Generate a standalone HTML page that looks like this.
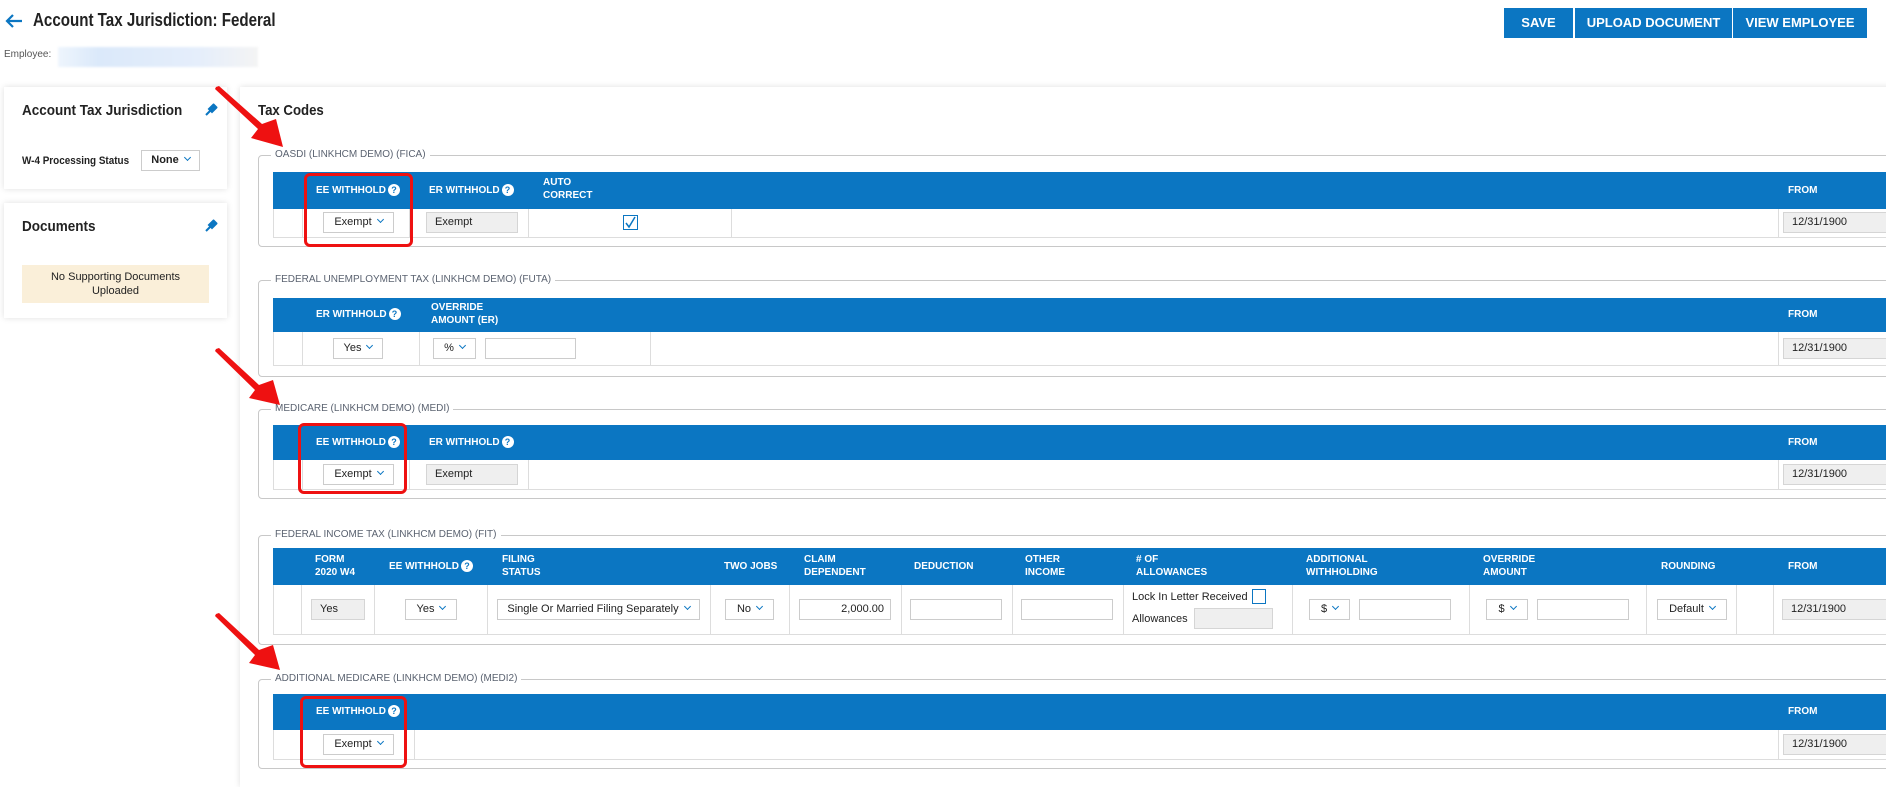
<!DOCTYPE html>
<html><head><meta charset="utf-8">
<style>
*{box-sizing:border-box;margin:0;padding:0}
body{width:1886px;height:776px;overflow:hidden;background:#fff;font-family:"Liberation Sans Narrow","Liberation Sans",sans-serif;color:#222;position:relative}
.a{position:absolute}
.card{position:absolute;background:#fff;box-shadow:0 0 6px rgba(0,0,0,.13)}
.fs{position:absolute;left:258px;right:-10px;border:1px solid #c8c8c8;border-radius:4px}
.lg{position:absolute;left:12px;top:-7px;background:#fff;padding:0 4px;font-size:10px;color:#5a6270;white-space:nowrap}
.hd{position:absolute;left:273px;right:0;background:#0b76c2}
.row{position:absolute;left:273px;right:0;border-bottom:1px solid #ddd;background:#fff}
.ht{position:absolute;color:#fff;font-size:10px;font-weight:bold;line-height:13px;white-space:nowrap}
.q{display:inline-block;width:12px;height:12px;border-radius:50%;background:#fff;color:#0b76c2;font-size:9px;text-align:center;line-height:12px;vertical-align:middle;margin-left:2px}
.sel{position:absolute;border:1px solid #ccc;background:#fff;font-size:11px;text-align:center;line-height:19px;height:21px;white-space:nowrap}
.sel i{display:inline-block;width:5px;height:5px;border-right:1px solid #0b76c2;border-bottom:1px solid #0b76c2;transform:rotate(45deg);margin-left:6px;position:relative;top:-3px}
.gb{position:absolute;border:1px solid #d5d5d5;background:#efefef;font-size:11px;line-height:19px;height:21px;padding-left:8px}
.in{position:absolute;border:1px solid #ccc;background:#fff;height:21px;font-size:11px;line-height:19px;text-align:right;padding-right:6px}
.vl{position:absolute;width:1px;background:#ddd}
.red{position:absolute;border:3px solid #ee1111;border-radius:6px}
.btn{position:absolute;top:8px;height:30px;background:#0b76c2;color:#fff;font-size:13px;font-weight:bold;text-align:center;line-height:30px}
</style></head><body>
<svg class="a" style="left:5px;top:14px" width="18" height="14"><path d="M8 1 L2 7 L8 13 M2 7 H17" stroke="#0b76c2" stroke-width="2.2" fill="none"/></svg>
<div class="a" style="left:33px;top:10px;font-size:18px;font-weight:bold;color:#222;transform:scaleX(.84);transform-origin:0 0;white-space:nowrap">Account Tax Jurisdiction: Federal</div>
<div class="a" style="left:4px;top:49px;font-size:10px;color:#555">Employee:</div>
<div class="a" style="left:58px;top:47px;width:200px;height:20px;background:linear-gradient(90deg,#eef5fd,#dbe9fa 20%,#e5eefb 70%,#f4f4f4);filter:blur(1px)"></div>
<div class="btn" style="left:1504px;width:69px">SAVE</div>
<div class="btn" style="left:1575px;width:157px">UPLOAD DOCUMENT</div>
<div class="btn" style="left:1733px;width:134px">VIEW EMPLOYEE</div>

<div class="card" style="left:4px;top:87px;width:223px;height:102px"></div>
<div class="a" style="left:22px;top:102px;font-size:15px;font-weight:bold;transform:scaleX(.9);transform-origin:0 0;white-space:nowrap">Account Tax Jurisdiction</div>
<svg class="a" style="left:204px;top:103px" width="14" height="14"><path d="M2 12 L6 8" stroke="#0b76c2" stroke-width="2"/><path d="M5 6 L9 2 L12 5 L8 9 Z M9 1 L13 5" stroke="#0b76c2" stroke-width="2" fill="#0b76c2"/></svg>
<div class="a" style="left:22px;top:155px;font-size:11px;font-weight:bold;transform:scaleX(.9);transform-origin:0 0;white-space:nowrap">W-4 Processing Status</div>
<div class="sel" style="left:141px;top:150px;width:59px;font-weight:bold">None<i></i></div>

<div class="card" style="left:4px;top:203px;width:223px;height:115px"></div>
<div class="a" style="left:22px;top:218px;font-size:15px;font-weight:bold;transform:scaleX(.9);transform-origin:0 0">Documents</div>
<svg class="a" style="left:204px;top:219px" width="14" height="14"><path d="M2 12 L6 8" stroke="#0b76c2" stroke-width="2"/><path d="M5 6 L9 2 L12 5 L8 9 Z M9 1 L13 5" stroke="#0b76c2" stroke-width="2" fill="#0b76c2"/></svg>
<div class="a" style="left:22px;top:265px;width:187px;height:38px;background:#faefd9;font-size:11px;text-align:center;line-height:14px;padding-top:5px">No Supporting Documents<br>Uploaded</div>

<div class="card" style="left:240px;top:87px;width:1660px;height:700px"></div>
<div class="a" style="left:258px;top:102px;font-size:15px;font-weight:bold;transform:scaleX(.88);transform-origin:0 0">Tax Codes</div>

<!-- OASDI -->
<div class="fs" style="top:155px;height:92px"><div class="lg">OASDI (LINKHCM DEMO) (FICA)</div></div>
<div class="hd" style="top:172px;height:37px"></div>
<div class="ht" style="left:316px;top:184px">EE WITHHOLD<span class="q">?</span></div>
<div class="ht" style="left:429px;top:184px">ER WITHHOLD<span class="q">?</span></div>
<div class="ht" style="left:543px;top:176px">AUTO<br>CORRECT</div>
<div class="ht" style="left:1788px;top:184px">FROM</div>
<div class="row" style="top:209px;height:29px;border-left:1px solid #ddd"></div>
<div class="vl" style="left:302px;top:209px;height:28px"></div><div class="vl" style="left:409px;top:209px;height:28px"></div><div class="vl" style="left:528px;top:209px;height:28px"></div><div class="vl" style="left:731px;top:209px;height:28px"></div><div class="vl" style="left:1778px;top:209px;height:28px"></div>
<div class="sel" style="left:323px;top:212px;width:71px">Exempt<i></i></div>
<div class="gb" style="left:426px;top:212px;width:92px">Exempt</div>
<div class="a" style="left:623px;top:215px;width:15px;height:15px;border:1px solid #0b76c2"><svg width="13" height="13" style="position:absolute;left:0;top:0"><path d="M2 7 L5 11 L11 1" stroke="#0b76c2" stroke-width="1.5" fill="none"/></svg></div>
<div class="gb" style="left:1783px;top:212px;width:110px">12/31/1900</div>

<!-- FUTA -->
<div class="fs" style="top:280px;height:97px"><div class="lg">FEDERAL UNEMPLOYMENT TAX (LINKHCM DEMO) (FUTA)</div></div>
<div class="hd" style="top:298px;height:34px"></div>
<div class="ht" style="left:316px;top:308px">ER WITHHOLD<span class="q">?</span></div>
<div class="ht" style="left:431px;top:301px">OVERRIDE<br>AMOUNT (ER)</div>
<div class="ht" style="left:1788px;top:308px">FROM</div>
<div class="row" style="top:332px;height:34px;border-left:1px solid #ddd"></div>
<div class="vl" style="left:302px;top:332px;height:33px"></div><div class="vl" style="left:419px;top:332px;height:33px"></div><div class="vl" style="left:650px;top:332px;height:33px"></div><div class="vl" style="left:1778px;top:332px;height:33px"></div>
<div class="sel" style="left:333px;top:338px;width:50px">Yes<i></i></div>
<div class="sel" style="left:433px;top:338px;width:43px">%<i></i></div>
<div class="in" style="left:485px;top:338px;width:91px"></div>
<div class="gb" style="left:1783px;top:338px;width:110px">12/31/1900</div>

<!-- MEDI -->
<div class="fs" style="top:409px;height:90px"><div class="lg">MEDICARE (LINKHCM DEMO) (MEDI)</div></div>
<div class="hd" style="top:425px;height:35px"></div>
<div class="ht" style="left:316px;top:436px">EE WITHHOLD<span class="q">?</span></div>
<div class="ht" style="left:429px;top:436px">ER WITHHOLD<span class="q">?</span></div>
<div class="ht" style="left:1788px;top:436px">FROM</div>
<div class="row" style="top:460px;height:30px;border-left:1px solid #ddd"></div>
<div class="vl" style="left:302px;top:460px;height:29px"></div><div class="vl" style="left:409px;top:460px;height:29px"></div><div class="vl" style="left:528px;top:460px;height:29px"></div><div class="vl" style="left:1778px;top:460px;height:29px"></div>
<div class="sel" style="left:323px;top:464px;width:71px">Exempt<i></i></div>
<div class="gb" style="left:426px;top:464px;width:92px">Exempt</div>
<div class="gb" style="left:1783px;top:464px;width:110px">12/31/1900</div>

<!-- FIT -->
<div class="fs" style="top:535px;height:110px"><div class="lg">FEDERAL INCOME TAX (LINKHCM DEMO) (FIT)</div></div>
<div class="hd" style="top:548px;height:37px"></div>
<div class="ht" style="left:315px;top:553px">FORM<br>2020 W4</div>
<div class="ht" style="left:389px;top:560px">EE WITHHOLD<span class="q">?</span></div>
<div class="ht" style="left:502px;top:553px">FILING<br>STATUS</div>
<div class="ht" style="left:724px;top:560px">TWO JOBS</div>
<div class="ht" style="left:804px;top:553px">CLAIM<br>DEPENDENT</div>
<div class="ht" style="left:914px;top:560px">DEDUCTION</div>
<div class="ht" style="left:1025px;top:553px">OTHER<br>INCOME</div>
<div class="ht" style="left:1136px;top:553px"># OF<br>ALLOWANCES</div>
<div class="ht" style="left:1306px;top:553px">ADDITIONAL<br>WITHHOLDING</div>
<div class="ht" style="left:1483px;top:553px">OVERRIDE<br>AMOUNT</div>
<div class="ht" style="left:1661px;top:560px">ROUNDING</div>
<div class="ht" style="left:1788px;top:560px">FROM</div>
<div class="row" style="top:585px;height:50px;border-left:1px solid #ddd"></div>
<div class="vl" style="left:301px;top:585px;height:49px"></div><div class="vl" style="left:374px;top:585px;height:49px"></div><div class="vl" style="left:487px;top:585px;height:49px"></div><div class="vl" style="left:710px;top:585px;height:49px"></div><div class="vl" style="left:789px;top:585px;height:49px"></div><div class="vl" style="left:901px;top:585px;height:49px"></div><div class="vl" style="left:1012px;top:585px;height:49px"></div><div class="vl" style="left:1123px;top:585px;height:49px"></div><div class="vl" style="left:1292px;top:585px;height:49px"></div><div class="vl" style="left:1469px;top:585px;height:49px"></div><div class="vl" style="left:1646px;top:585px;height:49px"></div><div class="vl" style="left:1736px;top:585px;height:49px"></div><div class="vl" style="left:1773px;top:585px;height:49px"></div>
<div class="gb" style="left:311px;top:599px;width:54px">Yes</div>
<div class="sel" style="left:405px;top:599px;width:52px">Yes<i></i></div>
<div class="sel" style="left:497px;top:599px;width:203px">Single Or Married Filing Separately<i></i></div>
<div class="sel" style="left:725px;top:599px;width:49px">No<i></i></div>
<div class="in" style="left:799px;top:599px;width:92px">2,000.00</div>
<div class="in" style="left:910px;top:599px;width:92px"></div>
<div class="in" style="left:1021px;top:599px;width:92px"></div>
<div class="a" style="left:1132px;top:591px;font-size:11px">Lock In Letter Received</div>
<div class="a" style="left:1252px;top:589px;width:14px;height:15px;border:1px solid #0b76c2"></div>
<div class="a" style="left:1132px;top:613px;font-size:11px">Allowances</div>
<div class="gb" style="left:1194px;top:608px;width:79px"></div>
<div class="sel" style="left:1309px;top:599px;width:41px">$<i></i></div>
<div class="in" style="left:1359px;top:599px;width:92px"></div>
<div class="sel" style="left:1486px;top:599px;width:42px">$<i></i></div>
<div class="in" style="left:1537px;top:599px;width:92px"></div>
<div class="sel" style="left:1657px;top:599px;width:70px">Default<i></i></div>
<div class="gb" style="left:1782px;top:599px;width:110px">12/31/1900</div>

<!-- MEDI2 -->
<div class="fs" style="top:679px;height:90px"><div class="lg">ADDITIONAL MEDICARE (LINKHCM DEMO) (MEDI2)</div></div>
<div class="hd" style="top:694px;height:36px"></div>
<div class="ht" style="left:316px;top:705px">EE WITHHOLD<span class="q">?</span></div>
<div class="ht" style="left:1788px;top:705px">FROM</div>
<div class="row" style="top:730px;height:30px;border-left:1px solid #ddd"></div>
<div class="vl" style="left:302px;top:730px;height:29px"></div><div class="vl" style="left:414px;top:730px;height:29px"></div><div class="vl" style="left:1778px;top:730px;height:29px"></div>
<div class="sel" style="left:323px;top:734px;width:71px">Exempt<i></i></div>
<div class="gb" style="left:1783px;top:734px;width:110px">12/31/1900</div>

<!-- red boxes -->
<div class="red" style="left:304px;top:173px;width:109px;height:74px"></div>
<div class="red" style="left:298px;top:423px;width:109px;height:71px"></div>
<div class="red" style="left:300px;top:696px;width:107px;height:72px"></div>

<!-- arrows -->
<svg class="a" style="left:0;top:0" width="300" height="776">
<g fill="#ee1111">
<polygon points="216,87 219,86 262,124 276,119 283,147 251,138 258,129 215,89"/>
<polygon points="216,349 219,348 259,385 273,380 280,405 249,398 255,390 215,351"/>
<polygon points="216,614 219,613 259,650 273,645 280,670 249,663 255,655 215,616"/>
</g></svg>
</body></html>
